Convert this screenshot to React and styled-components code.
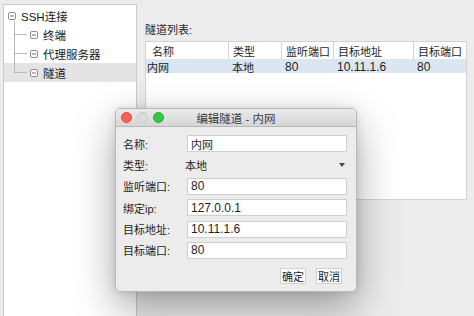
import { Fragment } from "react";
import styled, { createGlobalStyle } from "styled-components";

const GlobalStyle = createGlobalStyle`
	html, body {
		margin: 0;
		padding: 0;
		background: #ececec;
	}
	body {
		font-family: "Liberation Sans", "Noto Sans CJK SC", sans-serif;
		font-size: 11px;
		color: #1e1e1e;
	}
`;

const Screen = styled.div`
	position: relative;
	width: 474px;
	height: 316px;
	overflow: hidden;
	display: flex;
	box-sizing: border-box;
	padding: 4px 0 0 3px;
	background: #ececec;
`;

const TreePanel = styled.div`
	width: 134px;
	height: 320px;
	box-sizing: border-box;
	background: #fff;
	border: 1px solid #cacaca;
	padding-top: 2px;
`;

const TreeRow = styled.div`
	position: relative;
	display: flex;
	align-items: center;
	gap: 5px;
	height: ${({ $root }) => ($root ? "18px" : "19px")};
	padding-left: ${({ $root }) => ($root ? "4px" : "26px")};
	background: ${({ $selected }) => ($selected ? "#e4e4e4" : "transparent")};

	${({ $root, $last }) =>
		!$root &&
		`
		&::before {
			content: "";
			position: absolute;
			left: 10px;
			top: -4px;
			height: ${$last ? "13.5px" : "23px"};
			border-left: 1px solid #b9b9b9;
		}
		&::after {
			content: "";
			position: absolute;
			left: 10px;
			top: 9px;
			width: 13px;
			border-top: 1px solid #b9b9b9;
		}
	`}
`;

const TreeLabel = styled.span`
	font-size: 11.5px;
	color: #1a1a1a;
`;

const RightPane = styled.div`
	margin-left: 8px;
	display: flex;
	flex-direction: column;
`;

const PaneLabel = styled.div`
	margin-top: 19px;
	height: 14px;
	line-height: 14px;
	font-size: 11px;
`;

const Table = styled.div`
	margin-top: 4px;
	width: 322px;
	height: 159px;
	box-sizing: border-box;
	background: #fff;
	border: 1px solid #d2d2d2;
`;

const TableRow = styled.div`
	display: grid;
	grid-template-columns: 82px 53px 52px 80px 52px;
	height: ${({ $head }) => ($head ? "17px" : "14px")};
	align-items: center;
	background: ${({ $selected }) => ($selected ? "#dae6f2" : "transparent")};
`;

const HeadCell = styled.div`
	height: 100%;
	display: flex;
	align-items: center;
	padding-left: ${({ $first }) => ($first ? "6px" : "4px")};
	border-left: ${({ $first }) => ($first ? "none" : "1px solid #d4d4d4")};
	box-sizing: border-box;
`;

const Cell = styled.div`
	padding-left: ${({ $first }) => ($first ? "1px" : "4px")};
	font-size: ${({ $latin }) => ($latin ? "12px" : "11px")};
`;

const Dialog = styled.div`
	position: absolute;
	left: 115px;
	top: 108px;
	width: 242px;
	height: 184px;
	box-sizing: border-box;
	background: #ececec;
	border: 1px solid #b9b9b9;
	border-radius: 5px;
	box-shadow: 0 16px 40px rgba(0, 0, 0, 0.34), 0 0 8px rgba(0, 0, 0, 0.12);
	overflow: hidden;
	display: flex;
	flex-direction: column;
`;

const TitleBar = styled.div`
	position: relative;
	height: 17px;
	display: flex;
	align-items: center;
	justify-content: center;
	background: linear-gradient(#ebebeb, #d5d5d5);
	border-bottom: 1px solid #b8b8b8;
	font-size: 11.5px;
	color: #3a3a3a;
`;

const Lights = styled.div`
	position: absolute;
	left: 5px;
	top: 3px;
	display: flex;
	gap: 5px;
`;

const Light = styled.span`
	width: 11px;
	height: 11px;
	border-radius: 50%;
	box-sizing: border-box;
	background: ${({ $color }) => $color};
	border: 1px solid ${({ $edge }) => $edge};
`;

const Form = styled.div`
	display: grid;
	grid-template-columns: 64px 160px;
	grid-auto-rows: 17px;
	row-gap: 4.4px;
	align-items: center;
	padding: 8px 0 0 7px;
`;

const Label = styled.div`
	font-size: 11px;
	color: #1e1e1e;
`;

const Field = styled.div`
	height: 17px;
	box-sizing: border-box;
	background: #fff;
	border: 1px solid #cfcfcf;
	padding-left: 3px;
	display: flex;
	align-items: center;
	font-size: ${({ $latin }) => ($latin ? "12px" : "11px")};
`;

const Select = styled.div`
	margin-left: -3px;
	width: 165px;
	height: 18px;
	display: flex;
	align-items: center;
	justify-content: space-between;
	padding: 0 4px 0 1px;
	box-sizing: border-box;
	font-size: 11px;
`;

const Buttons = styled.div`
	display: flex;
	justify-content: flex-end;
	gap: 10px;
	padding: 9px 14px 0 0;
`;

const Button = styled.div`
	height: 14px;
	padding: 0 1px;
	display: flex;
	align-items: center;
	background: #fff;
	border: 1px solid #cfcfcf;
	font-size: 11px;
`;

function Toggle() {
	return (
		<svg width="8" height="8" viewBox="0 0 8 8">
			<rect x="0.5" y="0.5" width="7" height="7" rx="1.5" fill="#fff" stroke="#8d8d8d" />
			<line x1="2" y1="4" x2="6" y2="4" stroke="#6e6e6e" />
		</svg>
	);
}

function Caret() {
	return (
		<svg width="6" height="4" viewBox="0 0 6 4">
			<path d="M0 0 H6 L3 4 Z" fill="#4a4a4a" />
		</svg>
	);
}

const columns = ["名称", "类型", "监听端口", "目标地址", "目标端口"];
const tunnel = [
	{ value: "内网" },
	{ value: "本地" },
	{ value: "80", latin: true },
	{ value: "10.11.1.6", latin: true },
	{ value: "80", latin: true },
];

const fields = [
	{ label: "名称:", value: "内网" },
	{ label: "类型:", value: "本地", select: true },
	{ label: "监听端口:", value: "80", latin: true },
	{ label: "绑定ip:", value: "127.0.0.1", latin: true },
	{ label: "目标地址:", value: "10.11.1.6", latin: true },
	{ label: "目标端口:", value: "80", latin: true },
];

function ConnectionTree() {
	const children = ["终端", "代理服务器", "隧道"];
	return (
		<TreePanel>
			<TreeRow $root>
				<Toggle />
				<TreeLabel>SSH连接</TreeLabel>
			</TreeRow>
			{children.map((name, i) => (
				<TreeRow
					key={name}
					$last={i === children.length - 1}
					$selected={name === "隧道"}
				>
					<Toggle />
					<TreeLabel>{name}</TreeLabel>
				</TreeRow>
			))}
		</TreePanel>
	);
}

function TunnelTable() {
	return (
		<RightPane>
			<PaneLabel>隧道列表:</PaneLabel>
			<Table>
				<TableRow $head>
					{columns.map((c, i) => (
						<HeadCell key={c} $first={i === 0}>
							{c}
						</HeadCell>
					))}
				</TableRow>
				<TableRow $selected>
					{tunnel.map((c, i) => (
						<Cell key={i} $first={i === 0} $latin={c.latin}>
							{c.value}
						</Cell>
					))}
				</TableRow>
			</Table>
		</RightPane>
	);
}

function EditDialog() {
	return (
		<Dialog>
			<TitleBar>
				<Lights>
					<Light $color="#fc5f57" $edge="#e0443e" />
					<Light $color="#dcdcdc" $edge="#c8c8c8" />
					<Light $color="#34c84a" $edge="#27aa35" />
				</Lights>
				编辑隧道 - 内网
			</TitleBar>
			<Form>
				{fields.map((f) => (
					<Fragment key={f.label}>
						<Label>{f.label}</Label>
						{f.select ? (
							<Select>
								{f.value}
								<Caret />
							</Select>
						) : (
							<Field $latin={f.latin}>{f.value}</Field>
						)}
					</Fragment>
				))}
			</Form>
			<Buttons>
				<Button>确定</Button>
				<Button>取消</Button>
			</Buttons>
		</Dialog>
	);
}

export default function App() {
	return (
		<>
			<GlobalStyle />
			<Screen>
				<ConnectionTree />
				<TunnelTable />
				<EditDialog />
			</Screen>
		</>
	);
}
